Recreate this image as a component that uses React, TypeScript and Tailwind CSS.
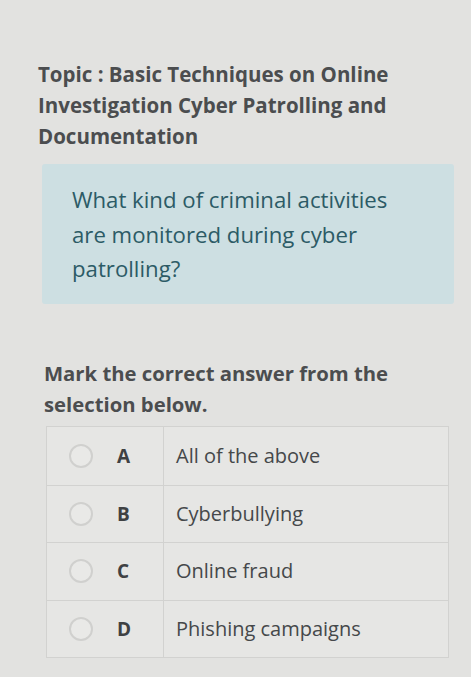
import React from "react";

const options = [
  { letter: "A", text: "All of the above" },
  { letter: "B", text: "Cyberbullying" },
  { letter: "C", text: "Online fraud" },
  { letter: "D", text: "Phishing campaigns" },
];

export default function App() {
  return (
    <div
      className="w-[471px] h-[677px] overflow-hidden bg-[#e2e2e0]"
      style={{ fontFamily: '"Open Sans", "Noto Sans", sans-serif' }}
    >
      <div className="pt-[59px] pl-[38px] pr-[20px]">
        <h1 className="text-[20.5px] leading-[31px] font-bold text-[#4b4d4f]">
          Topic : Basic Techniques on Online Investigation Cyber Patrolling and Documentation
        </h1>
      </div>
      <div className="mt-[12px] ml-[42px] mr-[17px] h-[140px] rounded-[3px] bg-[#cddfe2] pl-[30px] pr-[50px] pt-[19px]">
        <p className="text-[22.2px] leading-[34.5px] text-[#2c5b66]">
          What kind of criminal activities are monitored during cyber patrolling?
        </p>
      </div>
      <div className="mt-[54px] pl-[44px] pr-[60px]">
        <p className="text-[20.3px] leading-[31px] font-bold text-[#4b4d4f]">
          Mark the correct answer from the selection below.
        </p>
      </div>
      <div className="mt-[6px] ml-[46px] mr-[22px] border border-[#d2d2d0] bg-[#e6e6e4]">
        {options.map((o, i) => (
          <div
            key={o.letter}
            className={`flex h-[57.5px] items-center ${i > 0 ? "border-t border-[#d2d2d0]" : ""}`}
          >
            <div className="flex w-[117px] h-full items-center border-r border-[#d2d2d0]">
              <div className="ml-[22px] w-[24px] h-[24px] rounded-full border-2 border-[#d0d0ce] bg-[#e9e9e7]" />
              <span className="ml-[24px] text-[19px] font-bold text-[#3f4143]">{o.letter}</span>
            </div>
            <span className="ml-[12px] text-[20px] text-[#45484a]">{o.text}</span>
          </div>
        ))}
      </div>
    </div>
  );
}
